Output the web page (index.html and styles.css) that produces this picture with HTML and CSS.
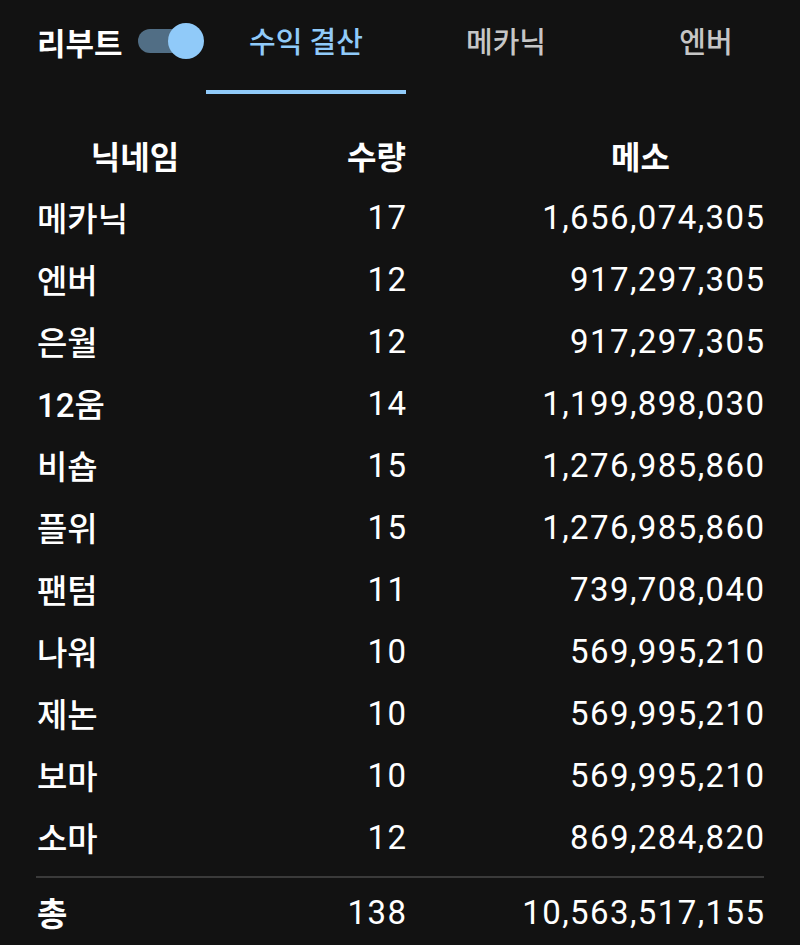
FILE: index.html
```html
<!DOCTYPE html>
<html lang="ko">
<head>
<meta charset="utf-8">
<link rel="stylesheet" href="styles.css">
</head>
<body>
<div class="topbar">
  <div class="reboot">
    <span class="reboot-label">리부트</span>
    <span class="switch"><span class="track"></span><span class="thumb"></span></span>
  </div>
  <nav class="tabs">
    <div class="tab active">수익 결산</div>
    <div class="tab">메카닉</div>
    <div class="tab">엔버</div>
  </nav>
</div>
<div class="table">
  <div class="row head">
    <div class="c-name">닉네임</div>
    <div class="c-qty">수량</div>
    <div class="c-meso">메소</div>
  </div>
  <div class="row"><div class="c-name">메카닉</div><div class="c-qty">17</div><div class="c-meso">1,656,074,305</div></div>
  <div class="row"><div class="c-name">엔버</div><div class="c-qty">12</div><div class="c-meso">917,297,305</div></div>
  <div class="row"><div class="c-name">은월</div><div class="c-qty">12</div><div class="c-meso">917,297,305</div></div>
  <div class="row"><div class="c-name">12움</div><div class="c-qty">14</div><div class="c-meso">1,199,898,030</div></div>
  <div class="row"><div class="c-name">비숍</div><div class="c-qty">15</div><div class="c-meso">1,276,985,860</div></div>
  <div class="row"><div class="c-name">플위</div><div class="c-qty">15</div><div class="c-meso">1,276,985,860</div></div>
  <div class="row"><div class="c-name">팬텀</div><div class="c-qty">11</div><div class="c-meso">739,708,040</div></div>
  <div class="row"><div class="c-name">나워</div><div class="c-qty">10</div><div class="c-meso">569,995,210</div></div>
  <div class="row"><div class="c-name">제논</div><div class="c-qty">10</div><div class="c-meso">569,995,210</div></div>
  <div class="row"><div class="c-name">보마</div><div class="c-qty">10</div><div class="c-meso">569,995,210</div></div>
  <div class="row"><div class="c-name">소마</div><div class="c-qty">12</div><div class="c-meso">869,284,820</div></div>
  <div class="divider"></div>
  <div class="row total"><div class="c-name">총</div><div class="c-qty">138</div><div class="c-meso">10,563,517,155</div></div>
</div>
</body>
</html>
```
FILE: styles.css
```css
html, body {
  margin: 0;
  padding: 0;
  background: #121212;
  color: #ffffff;
  font-family: "Roboto", "Noto Sans CJK KR", sans-serif;
  overflow: hidden;
}
.topbar {
  display: flex;
  height: 95px;
  overflow: hidden;
}
.reboot {
  flex: 0 0 206px;
  box-sizing: border-box;
  padding-left: 37px;
  display: flex;
  align-items: center;
  gap: 15px;
  height: 82px;
  white-space: nowrap;
}
.reboot-label {
  font-size: 31px;
  font-weight: 700;
}
.switch {
  position: relative;
  flex: 0 0 66px;
  height: 36px;
  display: inline-block;
}
.track {
  position: absolute;
  left: 0;
  top: 6px;
  width: 58px;
  height: 24px;
  border-radius: 12px;
  background: #516e85;
}
.thumb {
  position: absolute;
  left: 30px;
  top: 0;
  width: 36px;
  height: 36px;
  border-radius: 50%;
  background: #90caf9;
}
.tabs {
  display: flex;
  flex-shrink: 0;
}
.tab {
  flex: 0 0 200px;
  box-sizing: border-box;
  height: 94px;
  padding-top: 19px;
  text-align: center;
  font-size: 29px;
  font-weight: 500;
  color: #c6c6c6;
  border-bottom: 4px solid transparent;
  white-space: nowrap;
}
.tab.active {
  color: #90caf9;
  border-bottom-color: #90caf9;
}
.table {
  padding: 29px 36px 0;
}
.row {
  display: grid;
  grid-template-columns: 198px 172px 1fr;
  height: 62px;
  align-items: center;
  font-size: 33px;
}
.c-name {
  font-weight: 500;
  font-size: 33px;
  padding-left: 1px;
}
.c-qty, .c-meso {
  text-align: right;
  letter-spacing: 1.4px;
  margin-right: -1.4px;
}
.head div {
  font-weight: 700;
  font-size: 32px;
  letter-spacing: 0;
  margin-right: 0;
}
.head .c-name {
  text-align: center;
  padding-left: 0;
}
.head .c-meso {
  padding-right: 94px;
}
.divider {
  height: 2px;
  background: #3a3a3a;
  margin-top: 8px;
  margin-bottom: 3px;
}
.total .c-name {
  font-weight: 700;
}
```
